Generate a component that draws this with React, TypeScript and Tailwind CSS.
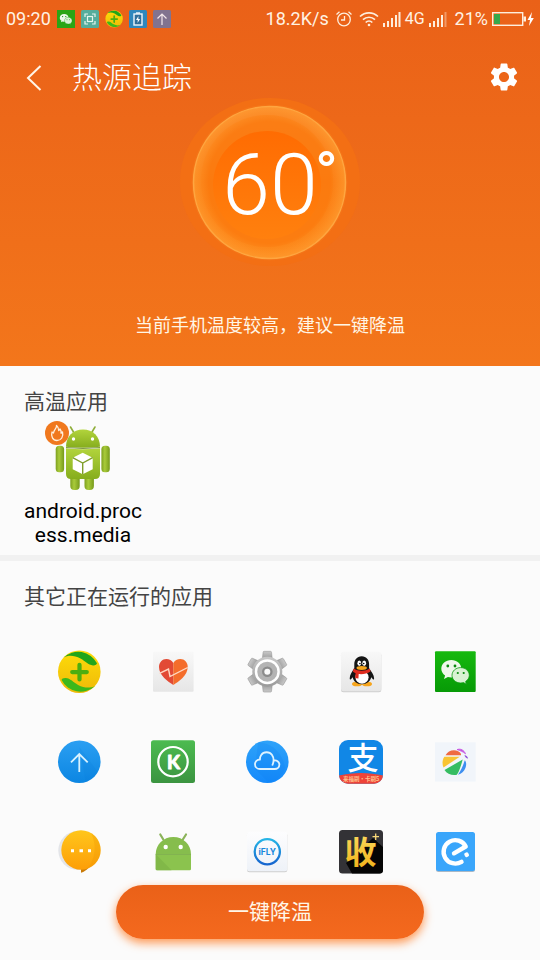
import type { ReactNode } from 'react';

const cjk = "font-['Roboto','Noto_Sans_CJK_SC',sans-serif]";

/* ---------- status bar ---------- */

function WeChatMark() {
  return (
    <>
      <path
        d="M18.3 10c-5.6 0-10 3.9-10 8.800 0 2.800 1.500 5.200 3.800 6.800l-1.100 3.300 3.900-1.900c1.100.3 2.200.5 3.400.5 5.600 0 10-3.800 10-8.700S23.900 10 18.300 10z"
        fill="#eef8ea"
      />
      <path
        d="M27.700 17.600c-4.900 0-8.700 3.400-8.700 7.700s3.800 7.700 8.700 7.700c1 0 1.900-.1 2.800-.4l2.900 1.600-.8-2.700c2.200-1.400 3.700-3.600 3.700-6.200 0-4.300-3.800-7.700-8.600-7.700z"
        fill="#d9f2d3"
        stroke="#0b9a10"
        strokeWidth=".8"
      />
      <circle cx="14.800" cy="16" r="1.400" fill="#0a8a0e" />
      <circle cx="22" cy="16" r="1.400" fill="#0a8a0e" />
      <circle cx="24.800" cy="23" r="1.100" fill="#0a8a0e" />
      <circle cx="30.700" cy="23" r="1.100" fill="#0a8a0e" />
    </>
  );
}

function PlusMark() {
  const swirl =
    'M6.500 7.500C11 5.200 17 5 23.500 8.500C28.500 11.200 31 15 36 15.400C38.500 15.500 39.800 14.600 40 13.300A21.300 21.300 0 0 0 6.500 7.500z';
  return (
    <>
      <circle cx="22.300" cy="21.700" r="21.300" fill="url(#plusYellow)" />
      <path d={swirl} fill="#22a51a" />
      <path d={swirl} fill="#3cb81b" transform="rotate(180 22.300 21.700)" />
      <path d="M22.500 14.800v14.600M15.200 22.100h14.600" stroke="#4cae10" strokeWidth="4.200" strokeLinecap="round" />
    </>
  );
}

function SignalBars({ faint }: { faint?: boolean }) {
  return (
    <svg viewBox="0 0 18 16" className="h-4 w-[18px]" fill="#fdeedd">
      <rect x="0" y="12" width="2" height="4" />
      <rect x="4" y="10" width="2" height="6" />
      <rect x="8" y="7" width="2" height="9" />
      <rect x="12" y="4" width="2" height="12" />
      <rect x="15.500" y="1" width="2" height="15" opacity={faint ? 0.4 : 1} />
    </svg>
  );
}

function StatusBar() {
  return (
    <div className="flex h-[38px] items-center justify-between px-1.5 text-lg leading-5 text-[#fff3e4]">
      <div className="flex items-center gap-1.5">
        <span>09:20</span>
        <svg viewBox="2 1 41 41" className="size-[18px]">
          <rect x="2" y="1" width="41" height="41" fill="#2aa515" />
          <WeChatMark />
        </svg>
        <svg viewBox="0 0 18 18" className="size-[18px]" fill="none" stroke="#e4f6ee">
          <rect width="18" height="18" rx="1.500" fill="#55ad9c" stroke="none" />
          <path d="M4 7V4h3M11 4h3v3M14 11v3h-3M7 14H4v-3" strokeWidth="1.200" />
          <rect x="6.500" y="6.500" width="5" height="5" strokeWidth="1.200" />
        </svg>
        <svg viewBox="0 0 44 44" className="size-[18px]">
          <PlusMark />
        </svg>
        <svg viewBox="0 0 18 18" className="size-[18px]">
          <rect width="18" height="18" rx="1.500" fill="#2f87bd" />
          <rect x="5" y="4" width="8" height="11" fill="#2f6f9c" stroke="#eef6fb" strokeWidth="1.400" />
          <rect x="7" y="2.300" width="4" height="1.500" fill="#eef6fb" />
          <path d="M9.500 6L7 10h1.800L8.500 13l2.600-4H9.300z" fill="#fff" />
        </svg>
        <svg viewBox="0 0 18 18" className="size-[18px]" fill="none" stroke="#f3e6ea" strokeWidth="1.200">
          <rect width="18" height="18" rx="1.500" fill="#82738f" stroke="none" />
          <path d="M9 15V4M4.500 8.500L9 4l4.500 4.500" />
        </svg>
      </div>
      <div className="flex items-center">
        <span>18.2K/s</span>
        <svg viewBox="0 0 18 18" className="ml-1.5 size-[18px]" fill="none" stroke="#fdeedd" strokeWidth="1.300">
          <circle cx="9" cy="9.500" r="6.300" />
          <path d="M9.500 6v4H6M1.500 4.500l3-2.700M16.500 4.500l-3-2.700" />
        </svg>
        <svg viewBox="0 0 20 16" className="ml-1.5 h-4 w-5" fill="none" stroke="#fdeedd" strokeWidth="1.700">
          <path d="M1 5.500a13 13 0 0 1 18 0M4 8.700a8.600 8.600 0 0 1 12 0M6.700 11.500a4.800 4.800 0 0 1 6.600 0" />
          <circle cx="10" cy="14" r="1.300" fill="#fdeedd" stroke="none" />
        </svg>
        <div className="ml-1 flex items-center gap-1">
          <SignalBars />
          <span className="text-base">4G</span>
          <SignalBars faint />
        </div>
        <span className="ml-2">21%</span>
        <svg viewBox="0 0 42 14" className="ml-1 h-3.5 w-[42px]">
          <rect x=".700" y=".700" width="30" height="12.600" fill="none" stroke="#fdeedd" strokeWidth="1.400" />
          <rect x="2" y="2" width="6" height="10" fill="#36a84a" />
          <rect x="31.500" y="4.500" width="2.500" height="5" fill="#fdeedd" />
          <path d="M40 0l-4.500 8H38l-1 6 4.800-8H39z" fill="#fff" />
        </svg>
      </div>
    </div>
  );
}

/* ---------- temperature dial ---------- */

function Dial() {
  return (
    <div className="relative mx-auto h-[168px] w-[180px]">
      <svg viewBox="0 0 180 168" className="size-full">
        <defs>
          <linearGradient id="dialFill" x1="0" y1="0" x2="0" y2="1">
            <stop offset="0" stopColor="#fb8423" />
            <stop offset=".5" stopColor="#fb7c12" />
            <stop offset="1" stopColor="#fd8415" />
          </linearGradient>
          <linearGradient id="dialCore" x1="0" y1="0" x2="0" y2="1">
            <stop offset="0" stopColor="#ff6c02" />
            <stop offset="1" stopColor="#ff800e" />
          </linearGradient>
          <radialGradient id="dialRim">
            <stop offset=".8" stopColor="#ffa63c" stopOpacity="0" />
            <stop offset="1" stopColor="#ffa63c" stopOpacity=".55" />
          </radialGradient>
        </defs>
        <ellipse cx="90" cy="84" rx="90" ry="84" fill="#f36f14" />
        <circle cx="89.500" cy="84.500" r="78" fill="#f57518" />
        <circle cx="89.500" cy="84.500" r="76" fill="url(#dialFill)" />
        <circle cx="87" cy="83" r="66" fill="#fc7a0d" opacity=".6" />
        <circle cx="87" cy="87" r="54" fill="url(#dialCore)" />
        <circle cx="89.500" cy="84.500" r="76" fill="url(#dialRim)" stroke="#fea640" strokeWidth="1.500" />
      </svg>
      <div className="absolute inset-0 flex items-center justify-center pt-1.5 text-white">
        <span className="text-[86px] leading-none font-light">60</span>
        <span className="absolute top-[45px] right-[22px] text-[60px] leading-none font-medium">°</span>
      </div>
    </div>
  );
}

/* ---------- app icons, all on a 44 unit grid ---------- */

function Tile({ fill = 'url(#paper)' }: { fill?: string }) {
  return (
    <>
      <rect x="2" y="2.700" width="40.300" height="39.500" rx="2.500" fill="#cfcfcf" />
      <rect x="2" y="1.700" width="40.300" height="39.500" rx="2.500" fill={fill} />
    </>
  );
}

const apps: { name: string; icon: ReactNode }[] = [
  { name: '360', icon: <PlusMark /> },
  {
    name: 'Health',
    icon: (
      <>
        <rect x="2" y="1.700" width="40.600" height="40" rx="1" fill="url(#paper)" />
        <path d="M22.300 35C17 31.500 8 25.500 8 17c0-4.500 3.300-8 7.300-8 3 0 5.500 1.300 7 4z" fill="#e24a35" />
        <path d="M22.300 35c5.400-3.500 14.400-9.500 14.400-18 0-4.500-3.300-8-7.300-8-3 0-5.600 1.300-7.100 4z" fill="#f46d2b" />
        <path d="M8.500 23.300l9-4.300 1.500 7.500 17.700-9" fill="none" stroke="#ffd9c4" strokeWidth="1.400" />
      </>
    ),
  },
  {
    name: 'Settings',
    icon: (
      <>
        {[0, 60, 120, 180, 240, 300].map((a) => (
          <path
            key={a}
            d="M17.300 9l.800-6.800q.1-.9 1-.9h6.400q.9 0 1 .9L27.300 9z"
            fill="url(#steel)"
            stroke="#8f8f8f"
            strokeWidth=".5"
            transform={`rotate(${a} 22.300 21.700)`}
          />
        ))}
        <circle cx="22.300" cy="21.700" r="15" fill="url(#steel)" />
        <circle cx="22.300" cy="21.700" r="11.300" fill="#b4b4b4" stroke="#fff" strokeWidth="2.500" />
        <circle cx="22.300" cy="21.700" r="5.300" fill="#8c8c8c" />
        <circle cx="22.300" cy="21.700" r="3" fill="#fafafa" />
      </>
    ),
  },
  {
    name: 'QQ',
    icon: (
      <>
        <Tile />
        <ellipse cx="18" cy="34" rx="5" ry="2.300" fill="#f6a51c" />
        <ellipse cx="28" cy="34" rx="5" ry="2.300" fill="#f6a51c" />
        <path
          d="M22.700 6.200c-4.800 0-7.400 3.700-7.400 8v4c-2.200 3.200-4.600 6.500-4.600 10.200 0 1.200.7 1.500 1.500.6l1.500-1.800c.8 4 4 7 9 7s8.700-3 9.500-7l1.500 1.800c.8.9 1.400.6 1.400-.6 0-3.700-2.800-7-5-10.200v-4c0-4.300-2.600-8-7.400-8z"
          fill="#141414"
        />
        <ellipse cx="23" cy="27.300" rx="6.600" ry="6.400" fill="#fff" />
        <path d="M14.700 18.500c4.500 3 11.500 3 16 0l.8 3c-3.500 2.400-8.500 3-11.800 2.500l-.3 4.500-3.300-.6.500-4.600-2.700-1.500z" fill="#df2b1e" />
        <ellipse cx="20.300" cy="13.300" rx="1.900" ry="2.700" fill="#fff" />
        <ellipse cx="25.200" cy="13.300" rx="1.900" ry="2.700" fill="#fff" />
        <circle cx="20.900" cy="13.500" r=".8" />
        <circle cx="24.700" cy="13.500" r=".8" />
        <ellipse cx="22.700" cy="18" rx="5.200" ry="1.900" fill="#f6a51c" />
      </>
    ),
  },
  {
    name: 'WeChat',
    icon: (
      <>
        <rect x="2" y="1.200" width="40.700" height="40.700" rx="1" fill="url(#wechat)" />
        <WeChatMark />
      </>
    ),
  },
  {
    name: 'Upload',
    icon: (
      <>
        <circle cx="22.300" cy="21.700" r="21.300" fill="url(#sky)" />
        <path d="M22.300 7l18.500 25a21 21 0 0 1-12 10z" fill="#0579d6" opacity=".15" />
        <path d="M22.300 32V14M14 22.300l8.300-8.300 8.400 8.300" fill="none" stroke="#d9f2ff" strokeWidth="1.800" />
      </>
    ),
  },
  {
    name: 'Kingroot',
    icon: (
      <>
        <rect y=".3" width="44" height="42.700" rx="2.500" fill="url(#leaf)" />
        <circle cx="22" cy="21.700" r="14.700" fill="none" stroke="#fff" strokeWidth="2.200" />
        <text x="22.500" y="28.500" textAnchor="middle" fontSize="19" fontWeight="700" fontFamily="Lato, sans-serif" fill="#fff" stroke="#fff" strokeWidth="1" strokeLinejoin="round">
          K
        </text>
      </>
    ),
  },
  {
    name: 'Cloud',
    icon: (
      <>
        <circle cx="22.300" cy="21.700" r="21.300" fill="url(#sky2)" />
        <path d="M13 2.500c13 0 24 9 27 25a21.300 21.300 0 0 1-16 15.500L10 29z" fill="#0a7df0" opacity=".2" />
        <path
          d="M27.500 24.800c2-4.500.7-8.100-.6-10-2.300-3.300-8.200-3.600-10.700.2-.9 1.300-1.300 2.600-1.300 4.500-2.800.2-4.900 2.200-4.900 4.700 0 2.800 2.200 4.800 5 4.800h14.700c2.600 0 4.700-1.900 4.700-4.400 0-2.900-3-4.800-5.600-4"
          fill="none"
          stroke="#dff3ff"
          strokeWidth="1.800"
          strokeLinecap="round"
        />
      </>
    ),
  },
  {
    name: 'Alipay',
    icon: (
      <>
        <rect width="44" height="43.700" rx="9" fill="#1187e6" />
        <path d="M0 35.500C14 32 30 32 44 35.500a9 9 0 0 1-9 8.200H9a9 9 0 0 1-9-8.200z" fill="#ee4338" />
        <text x="24" y="29" textAnchor="middle" fontSize="31" fontWeight="500" fontFamily="'Noto Sans CJK SC', sans-serif" fill="#fff">
          支
        </text>
        <text x="22" y="41" textAnchor="middle" fontSize="5.500" fontWeight="700" fontFamily="'Noto Sans CJK SC', sans-serif" fill="#ffc08a">
          来福刷·卡刷5
        </text>
      </>
    ),
  },
  {
    name: 'Browser',
    icon: (
      <>
        <rect x="2" y="2.300" width="40.700" height="39.300" fill="#f1f5fa" />
        <path d="M12.500 15.300c1.500-3.300 5-5.100 8.500-5.100 3 0 5.500 1.200 7 3.600v1.500z" fill="#ef6a42" />
        <path d="M11.300 16.700h15.500L10.500 27.500c-1.500-3.600-1.300-7.500.8-10.800z" fill="#f9c433" />
        <path d="M29.700 19.500c-1.700 6-3 11-5.800 15.300-4.800 1-9.900-.8-12.400-4.800z" fill="#35bd62" />
        <path d="M31.800 20.300c1.700 1.700 1.700 4.700.7 7.500-1.300 3.500-4 6-7.500 7 3-4.300 5-9.200 6.800-14.500z" fill="#3d8ff0" />
        <path d="M24 9.600c3.500-1.300 7 .4 8.500 4.200-2.300-2-5.300-3.200-8.500-4.200z" fill="#c44fe0" stroke="#c44fe0" strokeWidth=".8" />
        <path d="M31.500 15c1.800.3 3.200 1.600 3.600 3.600-1.500.1-3.200-1.500-3.600-3.600z" fill="#8e4fd8" />
      </>
    ),
  },
  {
    name: 'Messages',
    icon: (
      <>
        <circle cx="20.800" cy="20.500" r="19.500" fill="#e3e5e9" />
        <path d="M24 36v6.700c3-.9 5.500-2.500 7.500-5z" fill="#c97a06" />
        <circle cx="24" cy="20" r="19.700" fill="url(#sun)" />
        <path d="M34 3a19.700 19.700 0 0 1-5 36c8-6 12-22 5-36z" fill="#ef9400" opacity=".3" />
        <path d="M14 19.200h3v3h-3zM22.500 19.200h3.500v3h-3.500zM31 19.200h3v3h-3z" fill="#fff" />
      </>
    ),
  },
  {
    name: 'Android',
    icon: (
      <>
        <path d="M9.300 4.500l3 5M35 4.500l-3.200 5" stroke="#8bb35a" strokeWidth="2.200" strokeLinecap="round" />
        <path d="M4.700 24.300h35.300V39q0 1.300-1.300 1.300H6q-1.300 0-1.300-1.300z" fill="#8bc34e" />
        <path d="M4.700 24.300L20.500 40.300H6q-1.300 0-1.300-1.300z" fill="#7eb446" opacity=".7" />
        <path d="M4.700 24.300C4.700 14.500 12.300 7 22.300 7S40 14.500 40 24.300z" fill="#86bd4d" />
        <circle cx="14.700" cy="17" r="2.200" fill="#fff" />
        <circle cx="29.700" cy="17" r="2.200" fill="#fff" />
        <path d="M4.700 24.500h35.300" stroke="#6fa23c" strokeWidth=".6" />
      </>
    ),
  },
  {
    name: 'iFLY',
    icon: (
      <>
        <Tile fill="url(#paperBlue)" />
        <circle cx="22.300" cy="21.700" r="12.600" fill="none" stroke="url(#ifly)" strokeWidth="2.300" />
        <text x="22.300" y="24.700" textAnchor="middle" fontSize="8.500" fontWeight="700" fontFamily="Inter, sans-serif" fill="#1688dc">
          iFLY
        </text>
      </>
    ),
  },
  {
    name: 'Collect',
    icon: (
      <>
        <rect width="44" height="43.500" rx="3.500" fill="#333236" />
        <path d="M7 33L34 8l10 9v23a3.500 3.500 0 0 1-3.500 3.500H13z" fill="#050505" />
        <text x="21.500" y="33.500" textAnchor="middle" fontSize="32" fontWeight="700" fontFamily="'Noto Sans CJK SC', sans-serif" fill="url(#gold)">
          收
        </text>
        <path d="M36.700 3.500v6.500M33.500 6.700h6.500" stroke="#f8d878" strokeWidth="1.300" />
      </>
    ),
  },
  {
    name: 'Eleme',
    icon: (
      <>
        <rect x="3" y="3" width="39" height="39" rx="2.500" fill="#a9b8c6" />
        <rect x="3" y="2" width="39" height="39" rx="2.500" fill="#3aa6fb" />
        <path
          d="M21 23.300L32.700 16.500A11.700 11.700 0 1 0 28.500 31.800"
          fill="none"
          stroke="#fff"
          strokeWidth="4.400"
          strokeLinecap="round"
          strokeLinejoin="round"
        />
        <rect x="31.500" y="22.500" width="4.200" height="4.500" rx="1.500" fill="#fff" transform="rotate(-28 33.500 24.700)" />
      </>
    ),
  },
];

function IconDefs() {
  const stops: [string, string, string][] = [
    ['plusYellow', '#fddc0a', '#efb908'],
    ['paper', '#f8f8f8', '#e6e6e6'],
    ['paperBlue', '#fdfdfe', '#eef2f8'],
    ['steel', '#c9c9c9', '#9a9a9a'],
    ['wechat', '#16b90f', '#079a06'],
    ['sky', '#2b9ff2', '#0c86e2'],
    ['sky2', '#2fa3f9', '#1489fb'],
    ['leaf', '#4cbb50', '#3b9440'],
    ['sun', '#ffc61b', '#fd9e08'],
    ['ifly', '#26b5e6', '#1565cf'],
    ['gold', '#fde06a', '#efaf14'],
    ['droid', '#b2d43c', '#86ad1d'],
  ];
  return (
    <svg className="absolute size-0" aria-hidden="true">
      <defs>
        {stops.map(([id, from, to]) => (
          <linearGradient key={id} id={id} x1="0" y1="0" x2="0" y2="1">
            <stop offset="0" stopColor={from} />
            <stop offset="1" stopColor={to} />
          </linearGradient>
        ))}
        <linearGradient id="limb">
          <stop offset="0" stopColor="#7d9f1f" />
          <stop offset=".4" stopColor="#a9cb3a" />
          <stop offset="1" stopColor="#769a1b" />
        </linearGradient>
      </defs>
    </svg>
  );
}

function AndroidRobot() {
  return (
    <svg viewBox="0 0 72 72" className="size-[72px]">
      <path d="M23.500 5l3 5M48 5l-3 5" stroke="#8fae3a" strokeWidth="1.600" strokeLinecap="round" />
      <rect x="23.300" y="50" width="9.400" height="18" rx="4" fill="url(#limb)" />
      <rect x="37.500" y="50" width="9.400" height="18" rx="4" fill="url(#limb)" />
      <rect x="8.700" y="23.700" width="8.400" height="26.600" rx="3.500" fill="url(#limb)" />
      <rect x="54.400" y="23.700" width="8.400" height="26.600" rx="3.500" fill="url(#limb)" />
      <path d="M19 24.700C19 14.500 26 7.500 36 7.500s17 7 17 17.200q-17 2-34 0z" fill="url(#droid)" />
      <path d="M19 26.300q17 2 34 0V52q0 5-5 5H24q-5 0-5-5z" fill="url(#droid)" />
      <path d="M19 25.500q17 2 34 0" fill="none" stroke="#5f7f14" strokeWidth=".8" />
      <circle cx="26.500" cy="17" r="1.700" fill="#fff" />
      <circle cx="45.500" cy="17" r="1.700" fill="#fff" />
      <path d="M35.700 30.700l10 5v11.600l-10 5-10-5V35.700z" fill="#fff" />
      <path d="M25.700 35.700l10 5.300 10-5.300M35.700 41v11.300" fill="none" stroke="#7f9e2a" strokeWidth="1.400" />
    </svg>
  );
}

export default function App() {
  return (
    <div className={`flex min-h-screen flex-col bg-[#fbfbfb] ${cjk}`}>
      <IconDefs />

      <header className="bg-linear-to-b from-[#ea6118] to-[#f3761b] pb-7">
        <StatusBar />
        <div className="flex h-15 items-start justify-between px-6 pt-[17px] text-white">
          <div className="flex items-center gap-7">
            <button type="button" aria-label="返回" className="flex h-11 w-5 items-center justify-center">
              <svg viewBox="0 0 16 26" className="h-[26px] w-4" fill="none" stroke="#fff5e8" strokeWidth="2">
                <path d="M14.500 1L2 13l12.500 12" />
              </svg>
            </button>
            <h1 className="text-[30px] leading-[46px] font-light">热源追踪</h1>
          </div>
          <button type="button" aria-label="设置" className="-mr-2.5 flex size-11 items-center justify-center">
            <svg viewBox="2 2 20 20" className="size-7" fill="#fff">
              <path d="M19.140 12.940c.04-.3.060-.610.060-.940 0-.320-.020-.640-.070-.940l2.030-1.580c.18-.14.23-.41.12-.610l-1.920-3.320c-.12-.22-.37-.29-.59-.22l-2.390.96c-.5-.38-1.030-.7-1.620-.94l-.36-2.540c-.040-.24-.24-.41-.48-.41h-3.840c-.24 0-.43.17-.47.41l-.36 2.540c-.59.24-1.130.57-1.620.94l-2.390-.96c-.22-.08-.47 0-.59.22L2.740 8.870c-.12.21-.08.47.12.61l2.030 1.580c-.05.3-.09.63-.09.94s.02.64.07.94l-2.030 1.580c-.18.14-.23.41-.12.610l1.920 3.320c.12.22.37.29.59.22l2.390-.96c.5.38 1.030.7 1.620.94l.36 2.540c.05.24.24.41.48.41h3.840c.24 0 .44-.17.47-.41l.36-2.540c.59-.24 1.130-.56 1.620-.94l2.390.96c.22.08.47 0 .59-.22l1.920-3.320c.12-.22.07-.47-.12-.610l-2.010-1.580zM12 15.600c-1.980 0-3.600-1.620-3.600-3.600s1.620-3.600 3.600-3.600 3.600 1.620 3.600 3.600-1.620 3.600-3.600 3.600z" />
            </svg>
          </button>
        </div>
        <Dial />
        <p className="mt-12 text-center text-lg leading-6 text-[#fff6e6]">当前手机温度较高，建议一键降温</p>
      </header>

      <section className="border-b-[6px] border-[#f1f1f1] px-6 pt-5 pb-2">
        <h2 className="text-[21px] leading-8 text-[#444]">高温应用</h2>
        <div className="flex w-[118px] flex-col items-center">
          <div className="relative h-[81px] pt-1">
            <AndroidRobot />
            <span className="absolute top-[3px] -left-0.5 flex size-6 items-center justify-center rounded-full bg-[#f0781e]">
              <svg viewBox="0 0 16 18" className="h-[18px] w-4" fill="none" stroke="#fff0dd" strokeWidth="1.300" strokeLinejoin="round">
                <path d="M7.500 1.500c.6 2.700-2.700 4.200-3 7.500L3 8c-1.300 4.500.8 8.500 5 8.500s6.700-3.800 5.500-8.500l-1.500 1.200c.4-1.700-.2-3.200-1-4.200L9.700 6.500C9.800 4.300 9 2.700 7.500 1.500z" />
              </svg>
            </span>
          </div>
          <p className="w-[120px] text-center text-[21px] leading-6 break-all text-black">android.process.media</p>
        </div>
      </section>

      <section className="pt-5">
        <h2 className="px-6 text-[21px] leading-8 text-[#444]">其它正在运行的应用</h2>
        <ul className="grid grid-cols-5 gap-y-[46px] pt-[37px] pr-[38px] pl-8">
          {apps.map((app) => (
            <li key={app.name} className="flex justify-center">
              <svg viewBox="0 0 44 44" className="size-11 overflow-visible" role="img" aria-label={app.name}>
                {app.icon}
              </svg>
            </li>
          ))}
        </ul>
      </section>

      <footer className="sticky bottom-0 mt-auto flex justify-center px-4 pb-[21px]">
        <button
          type="button"
          className="h-[54px] w-full max-w-[308px] rounded-full bg-linear-to-b from-[#ea6118] to-[#f4691e] pt-0.5 text-[21px] text-[#fff6e8] shadow-[0_4px_10px_rgba(255,120,30,0.75)]"
        >
          一键降温
        </button>
      </footer>
    </div>
  );
}
